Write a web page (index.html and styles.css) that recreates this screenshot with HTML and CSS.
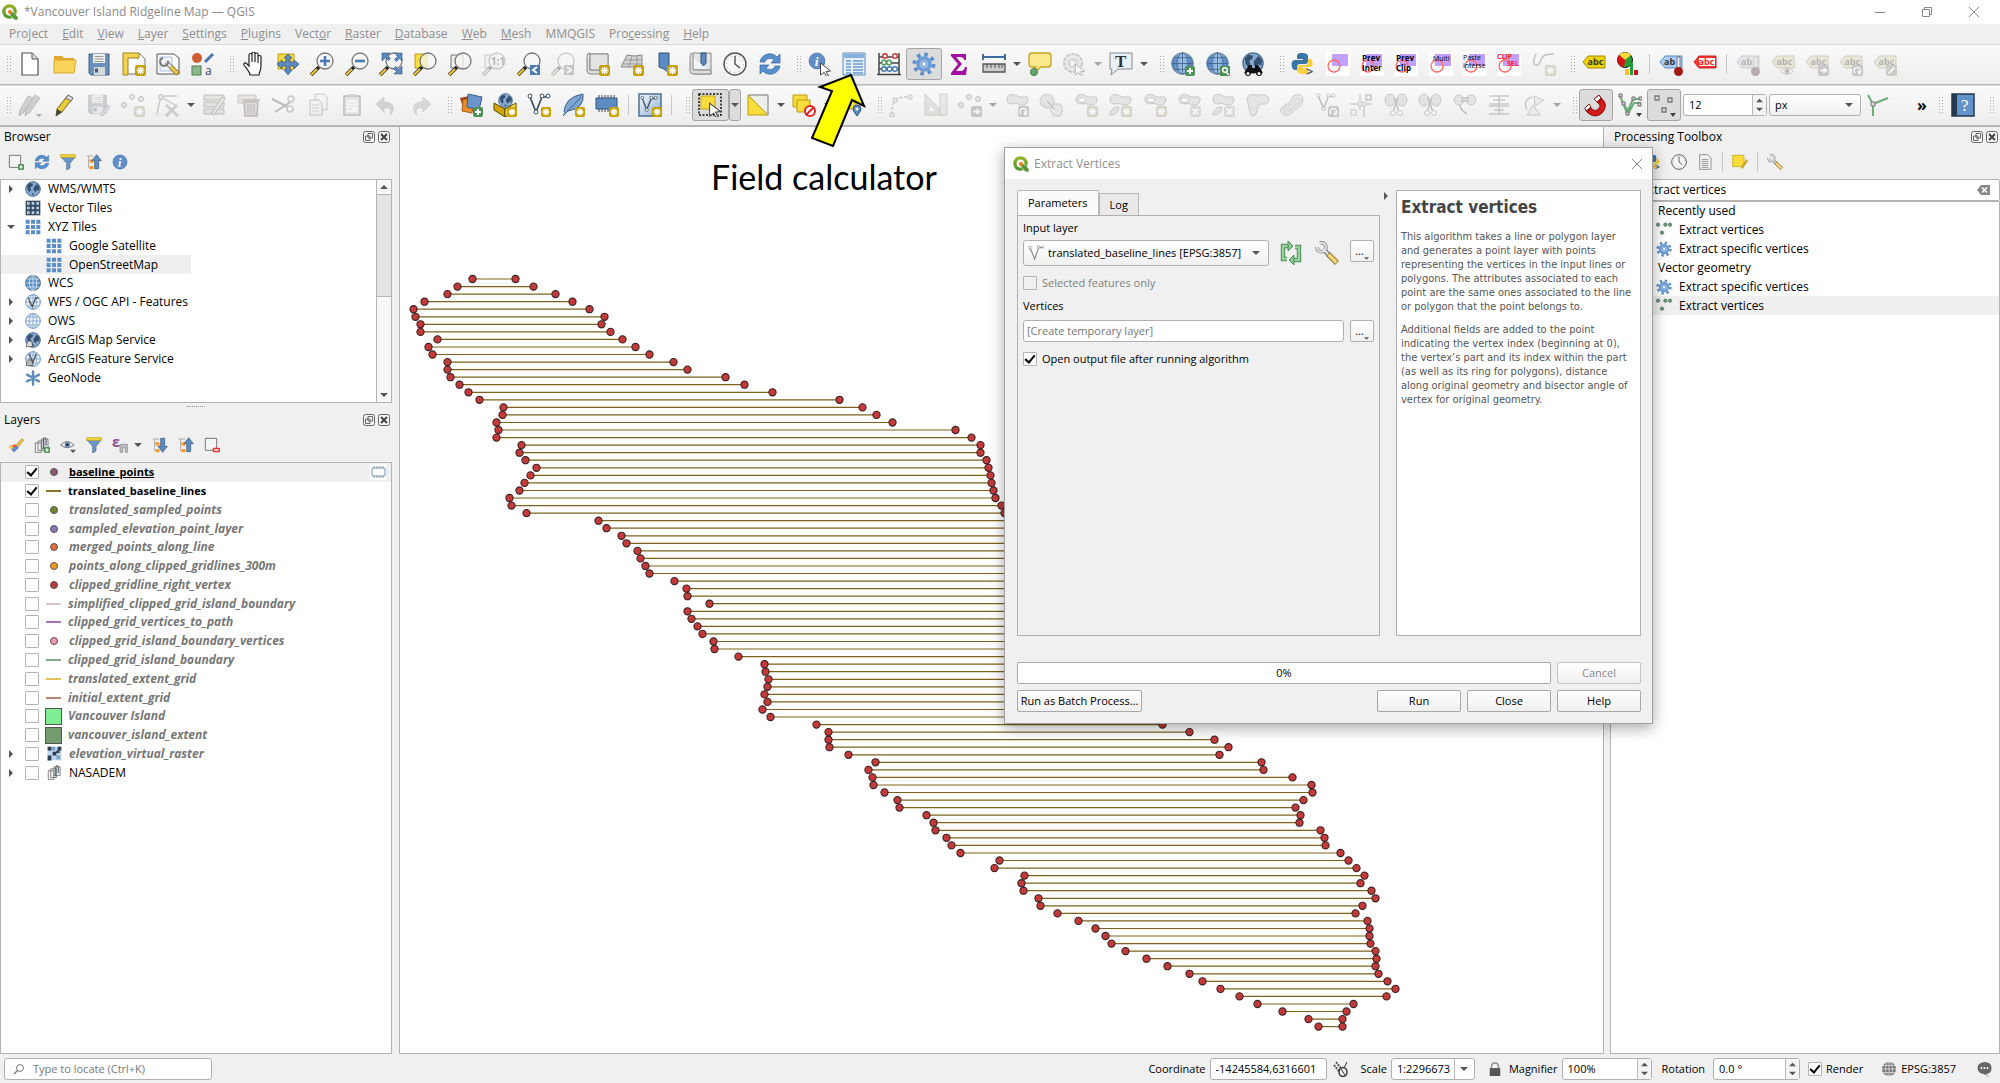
FILE: index.html
```html
<!DOCTYPE html>
<html lang="en">
<head>
<meta charset="utf-8">
<title>*Vancouver Island Ridgeline Map — QGIS</title>
<link rel="stylesheet" href="styles.css">
</head>
<body>
<svg class="defs" aria-hidden="true">
<defs>
<linearGradient id="gq" x1="0" y1="0" x2="0" y2="1"><stop offset="0" stop-color="#93b023"/><stop offset="1" stop-color="#4f9a2b"/></linearGradient>
<linearGradient id="gb" x1="0" y1="0" x2="1" y2="1"><stop offset="0" stop-color="#f4f8fc"/><stop offset="1" stop-color="#8fb0d4"/></linearGradient>
<linearGradient id="gw" x1="0" y1="0" x2="1" y2="0"><stop offset="0" stop-color="#3f74b8"/><stop offset=".5" stop-color="#a9cdf0"/><stop offset="1" stop-color="#3f74b8"/></linearGradient>
<symbol id="q" viewBox="0 0 16 16"><circle cx="7.500" cy="7.500" r="5.600" fill="none" stroke="url(#gq)" stroke-width="3.400"/><path d="M8 8h3.500l4.500 5v3h-3.500l-4.500-5z" fill="#589632" stroke="#fff" stroke-width=".6"/><circle cx="8" cy="8" r="2" fill="#ee7913"/></symbol>
<symbol id="b-star" viewBox="0 0 10 10"><rect width="10" height="10" rx="2" fill="#c4a000"/><path d="M5 1.500v7M1.500 5h7M2.500 2.500l5 5M7.500 2.500l-5 5" stroke="#fff" stroke-width="1.300"/></symbol>
<symbol id="b-plus" viewBox="0 0 10 10"><rect width="10" height="10" rx="2" fill="#4e9258"/><path d="M5 2v6M2 5h6" stroke="#fff" stroke-width="2"/></symbol>
<symbol id="b-x" viewBox="0 0 10 10"><rect width="10" height="10" rx="2" fill="#c9a5a5"/><path d="M2.500 2.500l5 5M7.500 2.500l-5 5" stroke="#fff" stroke-width="2"/></symbol>
<symbol id="b-go" viewBox="0 0 10 10"><rect width="10" height="10" rx="2" fill="#777"/><path d="M2 4h3V2l4 3-4 3V6H2z" fill="#fff"/></symbol>
<symbol id="b-rot" viewBox="0 0 10 10"><rect width="10" height="10" rx="2" fill="#777"/><path d="M3 7.500A3 3 0 1 1 6 8M6 4.500v3.500h2" fill="none" stroke="#fff" stroke-width="1.400"/></symbol>
<symbol id="b-pen" viewBox="0 0 10 10"><rect width="10" height="10" rx="2" fill="#8a8560"/><path d="M2.500 7.500l5-5" stroke="#fff" stroke-width="2"/></symbol>
<symbol id="lens" viewBox="0 0 24 24"><path d="M9 15l-8 8" stroke="#222" stroke-width="3.600"/><path d="M7 17l-6 6" stroke="#e8c33a" stroke-width="2.400"/><circle cx="15" cy="9" r="8" fill="#f6f7f4" fill-opacity=".75" stroke="#777" stroke-width="1.300"/></symbol>
<symbol id="globe" viewBox="0 0 24 24"><circle cx="12" cy="12" r="11.300" fill="#5b8cc4" stroke="#39536e"/><path d="M12 1v22M1 12h22M3 6h18M3 18h18" stroke="#cfe0ef" stroke-width="1.400"/><ellipse cx="12" cy="12" rx="5.500" ry="11" fill="none" stroke="#cfe0ef" stroke-width="1.400"/></symbol>
<symbol id="globew" viewBox="0 0 24 24"><circle cx="12" cy="12" r="11.300" fill="url(#gw)" stroke="#7a8794"/><path d="M12 1v22M1 12h22M3 6h18M3 18h18" stroke="#48698c" stroke-width="1"/><ellipse cx="12" cy="12" rx="6" ry="11" fill="none" stroke="#48698c"/></symbol>
<symbol id="globeo" viewBox="0 0 24 24"><circle cx="12" cy="12" r="11" fill="#eef4fb" stroke="#6d97c4" stroke-width="1.500"/><path d="M12 1v22M1 12h22M3 6h18M3 18h18" stroke="#7fa5cf" stroke-width="1.300"/><ellipse cx="12" cy="12" rx="5.500" ry="11" fill="none" stroke="#7fa5cf" stroke-width="1.300"/></symbol>
<symbol id="earth" viewBox="0 0 24 24"><circle cx="12" cy="12" r="11" fill="#86a8cf" stroke="#4d6d90" stroke-width="1.500"/><path d="M3 7l4-4 5 1-1 4-3 1 1 4-2 4-3-4zM13 10l5-6 4 5-1 6-3-2-2 4-3-3zM10 18l4 1-2 3z" fill="#34506f"/></symbol>
<symbol id="cursor" viewBox="0 0 12 14"><path d="M1 1l10 8-4.500.500 2.500 4-2 1-2.300-4L1 13z" fill="#fff" stroke="#444"/></symbol>
<symbol id="poly" viewBox="0 0 24 24"><path d="M2 8c0-6 5-7 10-4s12-2 11 4-7 6-10 4-10 3-11-4z" fill="#bcc6bc" stroke="#6f776f"/></symbol>
<symbol id="new" viewBox="0 0 24 24"><path d="M4 1h10l6 6v16H4z" fill="#fff" stroke="#555" stroke-width="1.200"/><path d="M14 1v6h6" fill="#ddd" stroke="#555"/></symbol>
<symbol id="open" viewBox="0 0 24 24"><path d="M1 4h8l2 2h10v4H1z" fill="#e3a92c"/><path d="M1 21V8h22l-2 13z" fill="#fad359" stroke="#d9a92e"/></symbol>
<symbol id="save" viewBox="0 0 24 24"><path d="M2 2h20v21H4l-2-2z" fill="#6a90bd" stroke="#44607e"/><path d="M6 2h12v9H6z" fill="#eee"/><path d="M7.500 4.500h9M7.500 7h9M7.500 9.500h9" stroke="#999"/><path d="M7 15h11v8H7z" fill="#d4d9de"/><path d="M8 16.500h3v4H8z" fill="#44607e"/></symbol>
<symbol id="layout" viewBox="0 0 24 24"><path d="M3 2h15l5 5v15H3z" fill="#fff" stroke="#777"/><path d="M1 1h16v5H6v17H1z" fill="#f2d453" stroke="#9b8322"/><use href="#b-star" x="13" y="13" width="11" height="11"/></symbol>
<symbol id="layoutm" viewBox="0 0 24 24"><path d="M1 2h17l5 4v16H1z" fill="#fff" stroke="#555"/><path d="M4 5h12v14H4z" fill="#eef4fa" stroke="#aac3de"/><path d="M10 10l6 6" stroke="#777" stroke-width="4"/><path d="M10 10l6 6" stroke="#eee" stroke-width="2.400"/><path d="M7 6a4 4 0 1 0 5 3" fill="none" stroke="#777" stroke-width="2"/><path d="M15 15l7 7" stroke="#8c7430" stroke-width="5"/><path d="M15 15l6.500 6.500" stroke="#e6bf45" stroke-width="3.400"/></symbol>
<symbol id="style" viewBox="0 0 24 24"><circle cx="6" cy="6" r="5" fill="#cf5c35"/><path d="M14 10l8-8" stroke="#4876ab" stroke-width="3"/><rect x="1" y="14" width="9" height="9" fill="#8db98d" stroke="#4e7d52"/><text x="14" y="23" font-size="12" fill="#444">a</text></symbol>
<symbol id="hand" viewBox="0 0 24 24"><path d="M8 14V3c0-2 3-2 3 0v7V1.500c0-2 3-2 3 0V10V2.500c0-2 3-2 3 0V11V5c0-2 3-2 3 0v9c0 5-2 6-2 9h-9c0-3-4-7-6-10-1-2 1.500-3 3-1z" fill="#fff" stroke="#222" stroke-width="1.200"/></symbol>
<symbol id="pan" viewBox="0 0 24 24"><path d="M2 2h16v15H2z" fill="#f5d936" stroke="#b79d1d"/><path d="M12 2l4 4h-2v4h4V8l5 4-5 5v-3h-4v4h2l-4 5-4-5h2v-4H6v3l-5-5 5-4v2h4V6H8z" fill="#5c8bc1" stroke="#33547a" stroke-width=".7"/></symbol>
<symbol id="zin" viewBox="0 0 24 24"><use href="#lens"/><path d="M15 4v10M10 9h10" stroke="#4a7ab3" stroke-width="2.600"/></symbol>
<symbol id="zout" viewBox="0 0 24 24"><use href="#lens"/><path d="M10 9h10" stroke="#4a7ab3" stroke-width="2.600"/></symbol>
<symbol id="zfull" viewBox="0 0 24 24"><use href="#lens"/><path d="M3 1h8L8.500 3.500l3 3-2 2-3-3L3 9zM23 1v8l-2.500-2.500-3 3-2-2 3-3L16 1zM23 22h-8l2.500-2.500-3-3 2-2 3 3L23 14z" fill="#5c8bc1" stroke="#33547a" stroke-width=".6"/></symbol>
<symbol id="zsel" viewBox="0 0 24 24"><path d="M2 2h12v14H2z" fill="#f8dc3c" stroke="#b79d1d"/><use href="#lens"/></symbol>
<symbol id="zlay" viewBox="0 0 24 24"><path d="M3 3h12v13H3z" fill="#eee" stroke="#777"/><use href="#lens"/></symbol>
<symbol id="znat" viewBox="0 0 24 24"><use href="#zlay"/><text x="9" y="13" font-size="10" font-weight="bold" fill="#333">1:1</text></symbol>
<symbol id="zlast" viewBox="0 0 24 24"><use href="#lens"/><path d="M13 13h10v10H13z" fill="#4a7ab3"/><path d="M20 15l-4 3 4 3" fill="none" stroke="#fff" stroke-width="2"/></symbol>
<symbol id="znext" viewBox="0 0 24 24"><use href="#lens"/><path d="M13 13h10v10H13z" fill="#777"/><path d="M16 15l4 3-4 3" fill="none" stroke="#fff" stroke-width="2"/></symbol>
<symbol id="mapn" viewBox="0 0 24 24"><path d="M1 4q0-3 3-3v17h18V2H4M1 4v15q0 3 4 3h12" fill="#ddd" stroke="#888"/><path d="M4 2h18v16H4z" fill="#e4e4e4" stroke="#888"/><use href="#b-star" x="13" y="13" width="11" height="11"/></symbol>
<symbol id="map3" viewBox="0 0 24 24"><path d="M7 3q8 2 15 0v12H1z" fill="#d4d4d4" stroke="#888"/><path d="M5 8h17M3 12h19M12 4l-3 11M17 4v11" stroke="#999"/><use href="#b-star" x="13" y="13" width="11" height="11"/></symbol>
<symbol id="bmn" viewBox="0 0 24 24"><path d="M5 1h10v20l-5-4-5-2z" fill="#5c8bc1" stroke="#33547a"/><use href="#b-star" x="13" y="13" width="11" height="11"/></symbol>
<symbol id="bm" viewBox="0 0 24 24"><path d="M1 4q0-3 3-3h18v17H5v4h17v-3" fill="#e4e4e4" stroke="#888"/><path d="M1 4v15q0 3 4 3h17V18H4V2" fill="#ddd" stroke="#888"/><path d="M12 1h5v10l-2.500 3L12 11z" fill="#5c8bc1" stroke="#33547a"/></symbol>
<symbol id="clock" viewBox="0 0 24 24"><circle cx="12" cy="12" r="11" fill="#f7f7f7" stroke="#555" stroke-width="1.400"/><circle cx="12" cy="12" r="8.500" fill="none" stroke="#999" stroke-dasharray="1 3.450"/><path d="M12 4v8l5 4" fill="none" stroke="#444" stroke-width="1.300"/></symbol>
<symbol id="refresh" viewBox="0 0 24 24"><path d="M2 10C3 2 14-1 19 5l3-3v9h-9l3-3c-3-3-9-1-9 2z" fill="#5a8fcf" stroke="#2f659f" stroke-width=".7"/><path d="M22 14c-1 8-12 11-17 5l-3 3v-9h9l-3 3c3 3 9 1 9-2z" fill="#5a8fcf" stroke="#2f659f" stroke-width=".7"/></symbol>
<symbol id="info" viewBox="0 0 24 24"><circle cx="12" cy="12" r="10.500" fill="#5f8fca" stroke="#3c6a9e"/><text x="9" y="19" font-size="18" font-family="Liberation Serif" font-style="italic" font-weight="bold" fill="#fff">i</text></symbol>
<symbol id="ident" viewBox="0 0 24 24"><use href="#info" width="18" height="18"/><use href="#cursor" x="11" y="10" width="13" height="14"/></symbol>
<symbol id="table" viewBox="0 0 24 24"><path d="M1 1h22v22H1z" fill="#e7f0fa" stroke="#5c8bc1"/><path d="M2 2h20v4H2z" fill="#88b1de"/><path d="M4 9h5M11 9h10M4 12h5M11 12h10M4 15h5M11 15h10M4 18h5M11 18h10M4 21h5M11 21h10" stroke="#6b9ad0" stroke-width="1.400"/></symbol>
<symbol id="abacus" viewBox="0 0 24 24"><path d="M2 1v21M22 1v21M2 5h20M2 11h20M2 17h20M0 22.500h24" stroke="#444" stroke-width="1.500"/><g fill="#fff" stroke-width="1.400"><g stroke="#c33"><circle cx="8" cy="4" r="2.300"/><circle cx="18" cy="4" r="2.300"/></g><g stroke="#4a9a54"><circle cx="7" cy="10.500" r="2.300"/><circle cx="12" cy="10.500" r="2.300"/></g><g stroke="#3c77b8"><circle cx="7" cy="17" r="2.300"/><circle cx="12.500" cy="17" r="2.300"/><circle cx="18" cy="17" r="2.300"/></g></g></symbol>
<symbol id="gear" viewBox="0 0 24 24"><circle cx="12" cy="12" r="9.500" fill="none" stroke="#5c8fce" stroke-width="4" stroke-dasharray="3.500 3.960"/><circle cx="12" cy="12" r="6" fill="#a9c8ea" stroke="#6d9cd6" stroke-width="3.400"/><circle cx="12" cy="12" r="2.600" fill="#eaf1f9" stroke="#5c8fce"/></symbol>
<symbol id="sigma" viewBox="0 0 24 24"><path d="M4 2h15v6h-2q0-3-4-3H9l6 7-6 7h5q3 0 4-4h2l-1 8H4v-2l7-9-7-8z" fill="#a310a3"/></symbol>
<symbol id="ruler" viewBox="0 0 24 24"><path d="M1 5h22M1 2v6M23 2v6" stroke="#3f6c9e" stroke-width="2"/><path d="M1 12h22v8H1z" fill="#ccc" stroke="#555" stroke-width="1.300"/><path d="M5 12v4M9 12v4M13 12v4M17 12v4M20 12v4" stroke="#555"/></symbol>
<symbol id="tip" viewBox="0 0 24 24"><path d="M4 1h16q3 0 3 3v8q0 3-3 3h-7l-7 6 2-6H4q-3 0-3-3V4q0-3 3-3z" fill="#fbe98c" stroke="#c3a21d" stroke-width="1.300"/><circle cx="6" cy="20" r="3.500" fill="#69a86f" stroke="#3b7a42"/></symbol>
<symbol id="act" viewBox="0 0 24 24"><circle cx="11" cy="11" r="9" fill="#ddd" stroke="#777" stroke-width="2" stroke-dasharray="4 1"/><circle cx="11" cy="11" r="5.500" fill="#aaa"/><path d="M9 8l5 3-5 3z" fill="#fff"/><use href="#cursor" x="12" y="11" width="12" height="13"/></symbol>
<symbol id="text" viewBox="0 0 24 24"><path d="M1 1h22v16H9l-7 6 1-6H1z" fill="#e8f1f8" stroke="#888"/><text x="6" y="15" font-size="17" font-family="Liberation Serif" font-weight="bold" fill="#333">T</text></symbol>
<symbol id="gadd" viewBox="0 0 24 24"><use href="#globew" width="23" height="23"/><use href="#b-plus" x="14" y="14" width="10" height="10"/></symbol>
<symbol id="gsea" viewBox="0 0 24 24"><use href="#globew" width="23" height="23"/><path d="M14 14h10v10H14z" fill="#4e9258"/><circle cx="19" cy="18" r="2.300" fill="none" stroke="#fff" stroke-width="1.400"/><path d="M20 20l3 3" stroke="#fff" stroke-width="1.400"/></symbol>
<symbol id="gbin" viewBox="0 0 24 24"><use href="#earth" width="24" height="22"/><path d="M8 13h3v3h3v-3h3l5 8H3z" fill="#111"/><circle cx="7" cy="21" r="3" fill="#111"/><circle cx="18" cy="21" r="3" fill="#111"/><circle cx="7" cy="21.500" r="1.500" fill="#fff"/><circle cx="18" cy="21.500" r="1.500" fill="#fff"/></symbol>
<symbol id="py" viewBox="0 0 24 24"><path d="M11 1c-5 0-5 2-5 4v2h6v1H4c-3 0-4 3-3 7 .500 2 1.500 3 3 3h2v-3c0-2 1-3 3-3h5c2 0 3-1 3-3V5c0-3-2-4-6-4z" fill="#3a75a9"/><path d="M12 22c5 0 5-2 5-4v-2h-6v-1h8c3 0 3-3 2-6-.500-2-1.500-2-3-2h-1v3c0 2-1 3-3 3H9c-2 0-3 1-3 3v3c0 2 2 3 6 3z" fill="#fbcf3e"/><text x="15" y="24" font-size="13" font-weight="bold" fill="#555">&gt;</text></symbol>
<symbol id="pc" viewBox="0 0 24 24"><path d="M0 0h24v24H0z" fill="#fff"/><path d="M6 2h16v12H6z" fill="#c3a0ff"/><circle cx="8" cy="14" r="6" fill="none" stroke="#f66" stroke-width="1.300"/></symbol>
<symbol id="curve" viewBox="0 0 24 24"><path d="M4 2C-2 14 6 16 8 10S12 2 22 2" fill="none" stroke="#666" stroke-width="1.500"/><use href="#b-star" x="13" y="13" width="11" height="11"/></symbol>
<symbol id="abc" viewBox="0 0 24 24"><path d="M1 10l5-6h17v12H6z" fill="#edd400" stroke="#a08c00"/><text x="5.500" y="13" font-size="9" font-weight="bold" fill="#333">abc</text></symbol>
<symbol id="abcr" viewBox="0 0 24 24"><path d="M1 10l5-6h17v12H6z" fill="#f33" stroke="#c22"/><path d="M6 6h16v8H6z" fill="#fff"/><text x="5.500" y="13" font-size="9" font-weight="bold" fill="#f22">abc</text></symbol>
<symbol id="abct" viewBox="0 0 24 24"><path d="M1 10l5-6h17v12H6z" fill="#a9cdf3" stroke="#5c8bc1"/><text x="5" y="13" font-size="9" font-weight="bold" fill="#333">ab</text><path d="M18 5h3v12h-3z" fill="#eee" stroke="#555" stroke-width=".7"/><circle cx="19.500" cy="19.500" r="4.500" fill="#a01818"/></symbol>
<symbol id="eye" viewBox="0 0 24 24"><path d="M1 13Q12 2 23 13Q12 22 1 13z" fill="#fff" stroke="#666" stroke-width="1.500"/><circle cx="12" cy="12.500" r="4.500" fill="#5c8bc1"/><circle cx="12" cy="12.500" r="2" fill="#222"/></symbol>
<symbol id="eyed" viewBox="0 0 24 24"><use href="#eye" width="22" height="22"/><path d="M15 19h9l-4.500 5z" fill="#555"/></symbol>
<symbol id="abce" viewBox="0 0 24 24"><use href="#abc"/><use href="#eye" x="8" y="12" width="16" height="14"/></symbol>
<symbol id="abcg" viewBox="0 0 24 24"><use href="#abc"/><use href="#b-go" x="13" y="13" width="11" height="11"/></symbol>
<symbol id="abco" viewBox="0 0 24 24"><use href="#abc"/><use href="#b-rot" x="13" y="13" width="11" height="11"/></symbol>
<symbol id="abcp" viewBox="0 0 24 24"><use href="#abc"/><use href="#b-pen" x="13" y="13" width="11" height="11"/></symbol>
<symbol id="pie" viewBox="0 0 24 24"><circle cx="9" cy="8" r="7.500" fill="#2a9a33" stroke="#222"/><path d="M9 8L3 3a8 8 0 0 1 12 0z" fill="#fbd93a"/><path d="M9 8L3 3a8 8 0 0 0 5 12.500z" fill="#d11"/><path d="M9 17h4v6H9z" fill="#fb3"/><path d="M14 11h3v12h-3z" fill="#1f9a3c"/><path d="M18 18h4v5h-4z" fill="#c11"/></symbol>
<symbol id="pencil" viewBox="0 0 24 24"><path d="M4 16L15 2l5 3L9 19l-6 4z" fill="#e8cb3c" stroke="#77661a"/><path d="M4 16l5 3-6 4z" fill="#444"/><path d="M15 2l5 3-2 3-5-3z" fill="#ddd" stroke="#777"/></symbol>
<symbol id="pencils" viewBox="0 0 24 24"><g fill="#a08888" stroke="#555"><path d="M2 17L10 3l5 2L6 19l-5 4z"/><path d="M8 17L17 2l5 3-10 14-5 4z"/></g><path d="M18 21h6l-3 3z" fill="#222"/></symbol>
<symbol id="savee" viewBox="0 0 24 24"><use href="#save" width="21" height="22"/><path d="M13 22l8-10 2 2-7 9z" fill="#d4a6a0" stroke="#777"/></symbol>
<symbol id="pts" viewBox="0 0 24 24"><g fill="#ccd" stroke="#556"><circle cx="3" cy="12" r="2.500"/><circle cx="11" cy="4" r="2.500"/><circle cx="20" cy="6" r="2.500"/></g><use href="#b-star" x="13" y="13" width="11" height="11"/></symbol>
<symbol id="ptsg" viewBox="0 0 24 24"><g fill="#ccd" stroke="#556"><circle cx="3" cy="12" r="2.500"/><circle cx="11" cy="4" r="2.500"/><circle cx="20" cy="6" r="2.500"/></g><use href="#b-go" x="13" y="13" width="11" height="11"/></symbol>
<symbol id="vtx" viewBox="0 0 24 24"><path d="M1 22Q3 10 5 4M3 3h18M5 4l14 8" fill="none" stroke="#777" stroke-width="1.400"/><circle cx="5" cy="4" r="2.500" fill="#ccc" stroke="#555"/><path d="M10 12l12 11M21 12L10 23" stroke="#888" stroke-width="3"/></symbol>
<symbol id="attr" viewBox="0 0 24 24"><path d="M2 2h20v5H2zM2 9h20v5H2zM2 16h20v5H2z" fill="#c5c5a5" stroke="#555"/><path d="M9 21L20 4l3 2-11 16z" fill="#ccc" stroke="#555"/></symbol>
<symbol id="del" viewBox="0 0 24 24"><path d="M1 2h18v8H1z" fill="#ccc49a" stroke="#777"/><path d="M5 7h18M7 9h14l-1 14H8z" fill="#caa3a3" stroke="#844" stroke-width="1.400"/><path d="M11 11v10M14 11v10M17 11v10" stroke="#844"/></symbol>
<symbol id="cut" viewBox="0 0 24 24"><path d="M1 6l16 8M4 19L21 8" stroke="#555" stroke-width="2"/><circle cx="20" cy="6" r="3" fill="none" stroke="#777" stroke-width="1.500"/><circle cx="19" cy="16" r="3" fill="none" stroke="#777" stroke-width="1.500"/></symbol>
<symbol id="copy" viewBox="0 0 24 24"><path d="M9 1h9l3 3v13H9z" fill="#eee" stroke="#777"/><path d="M4 7h9l3 3v12H4z" fill="#eee" stroke="#666"/><path d="M6 12h7M6 15h7M6 18h7" stroke="#999"/></symbol>
<symbol id="paste" viewBox="0 0 24 24"><path d="M4 3h16v19H4z" fill="#ccc" stroke="#555" stroke-width="1.500"/><path d="M7 7h10v12H7z" fill="#fff"/><path d="M9 1h6v4H9z" fill="#999"/><path d="M8 10h8M8 13h8M8 16h5" stroke="#aaa"/></symbol>
<symbol id="undo" viewBox="0 0 24 24"><path d="M2 11l8-7v5c10-1 12 8 6 13 3-6-1-8-6-7v4z" fill="#aa8f80" stroke="#777" stroke-width=".7"/></symbol>
<symbol id="redo" viewBox="0 0 24 24"><path d="M22 11l-8-7v5C4 8 2 17 8 22c-3-6 1-8 6-7v4z" fill="#9aac9a" stroke="#777" stroke-width=".7"/></symbol>
<symbol id="dsm" viewBox="0 0 24 24"><path d="M1 5l9-2 3 13-8 2z" fill="#a33c1a"/><path d="M4 6l11 1-2 13-10-2z" fill="#e88c2a" stroke="#a35c1a"/><path d="M9 1l14 3-3 13-12-3z" fill="#6a95c9" stroke="#3b5f8c"/><use href="#b-plus" x="14" y="14" width="10" height="10"/></symbol>
<symbol id="gpkg" viewBox="0 0 24 24"><use href="#earth" x="5" y="0" width="15" height="15"/><path d="M1 10l11 6v8L1 17z" fill="#d2a500" stroke="#574800"/><path d="M12 16l11-6v8l-11 6z" fill="#fbe14b" stroke="#574800"/><use href="#b-star" x="14" y="14" width="10" height="10"/></symbol>
<symbol id="vnode" viewBox="0 0 24 24"><path d="M3 4l6 15L15 4h7" fill="none" stroke="#3b4f63" stroke-width="1.700"/><g fill="#fff" stroke="#3b4f63"><circle cx="3" cy="3" r="2"/><circle cx="9" cy="19" r="2"/><circle cx="15" cy="3" r="2"/><circle cx="21" cy="3" r="2"/></g></symbol>
<symbol id="vlin" viewBox="0 0 24 24"><path d="M3 4l7 17L16 4h6" fill="none" stroke="#888" stroke-width="1.700"/><g fill="#fff" stroke="#888"><circle cx="3" cy="4" r="2"/><circle cx="16" cy="3" r="2"/><circle cx="22" cy="3" r="1.500"/></g></symbol>
<symbol id="vnew" viewBox="0 0 24 24"><use href="#vnode"/><use href="#b-star" x="14" y="14" width="10" height="10"/></symbol>
<symbol id="feather" viewBox="0 0 24 24"><path d="M3 19Q4 4 22 1Q24 15 7 18L2 23" fill="#7fa6d3" stroke="#3b5f8c"/><path d="M2 23L20 4" stroke="#3b5f8c"/><use href="#b-star" x="14" y="14" width="10" height="10"/></symbol>
<symbol id="chip" viewBox="0 0 24 24"><path d="M4 2v17M7 2v17M10 2v17M13 2v17M16 2v17M19 2v17" stroke="#444"/><path d="M1 5h21v11H1z" fill="#5c8bc1" stroke="#33547a"/><use href="#b-star" x="14" y="14" width="10" height="10"/></symbol>
<symbol id="virt" viewBox="0 0 24 24"><path d="M1 1h22v22H1z" fill="url(#gb)" stroke="#4d6d90" stroke-width="1.500"/><use href="#vnode" x="2" y="2" width="18" height="19"/><use href="#b-star" x="14" y="14" width="10" height="10"/></symbol>
<symbol id="sel" viewBox="0 0 24 24"><path d="M1 1h22v21H1z" fill="none" stroke="#111" stroke-width="1.500" stroke-dasharray="2 1.500"/><path d="M3 3h14v13H3z" fill="#f8dc3c" stroke="#c4a915"/><use href="#cursor" x="10" y="9" width="14" height="15"/></symbol>
<symbol id="selv" viewBox="0 0 24 24"><path d="M2 2h20v20z" fill="#eee" stroke="#777"/><path d="M2 2v20h20z" fill="#f8dc3c" stroke="#b99c10"/></symbol>
<symbol id="desel" viewBox="0 0 24 24"><path d="M1 2h14v12H1z" fill="#f8dc3c" stroke="#b99c10"/><path d="M5 7h13v12H5z" fill="#f8dc3c" stroke="#b99c10"/><circle cx="18" cy="18" r="5" fill="#fff" stroke="#d22" stroke-width="2"/><path d="M14 22l8-8" stroke="#d22" stroke-width="2"/></symbol>
<symbol id="sloc" viewBox="0 0 24 24"><path d="M3 3h14v13H3z" fill="#f8dc3c" stroke="#b99c10"/><path d="M18 23q-4-5-4-7a4 4 0 0 1 8 0q0 2-4 7z" fill="#5c8bc1" stroke="#33547a"/><circle cx="18" cy="16" r="1.500" fill="#fff"/></symbol>
<symbol id="arc" viewBox="0 0 24 24"><path d="M3 22Q1 2 21 4" fill="none" stroke="#777" stroke-width="1.500" stroke-dasharray="3 2"/><path d="M1 20h4v4H1zM4 5h4v4H4zM19 2h4v4h-4z" fill="#ddd" stroke="#777"/></symbol>
<symbol id="tri" viewBox="0 0 24 24"><path d="M1 1l20 21H1z" fill="#ccb9b0" stroke="#887"/><path d="M6 13l5 5H6z" fill="#fff"/><path d="M16 1h7v21h-7z" fill="#d5d5b0" stroke="#887"/></symbol>
<symbol id="p1" viewBox="0 0 24 24"><use href="#poly" y="-1"/><use href="#b-rot" x="13" y="13" width="11" height="11"/></symbol>
<symbol id="p2" viewBox="0 0 24 24"><circle cx="8" cy="8" r="7" fill="#bcc6bc" stroke="#6f776f"/><path d="M11 17l4-6h6l3 6-3 6h-6z" fill="#ccd3dd" stroke="#6f776f"/><path d="M8 8l8 8" stroke="#333"/></symbol>
<symbol id="p3" viewBox="0 0 24 24"><use href="#poly" y="-1"/><ellipse cx="8" cy="7" rx="4" ry="2.500" fill="#fff" stroke="#777"/><use href="#b-star" x="13" y="13" width="11" height="11"/></symbol>
<symbol id="p4" viewBox="0 0 24 24"><use href="#poly" y="-1"/><path d="M2 20q3-7 9-6-1 8-9 8z" fill="#bcc6bc" stroke="#6f776f"/><use href="#b-star" x="13" y="13" width="11" height="11"/></symbol>
<symbol id="p5" viewBox="0 0 24 24"><use href="#poly" y="-1"/><ellipse cx="8" cy="7" rx="4" ry="2.500" fill="#fff" stroke="#777"/><use href="#b-x" x="13" y="13" width="11" height="11"/></symbol>
<symbol id="p6" viewBox="0 0 24 24"><use href="#poly" y="-1"/><path d="M2 20q3-7 9-6-1 8-9 8z" fill="#bcc6bc" stroke="#6f776f"/><use href="#b-x" x="13" y="13" width="11" height="11"/></symbol>
<symbol id="p7" viewBox="0 0 24 24"><path d="M1 6q1-6 9-4 13-2 13 5 0 5-9 4-2 2-3 7t-4 5-4-8z" fill="#c3c9bb" stroke="#6f776f"/></symbol>
<symbol id="p8" viewBox="0 0 24 24"><path d="M13 3q9-4 10 3t-9 11q-5 8-11 4T5 12q6-2 8-9z" fill="#d9d6bb" stroke="#6f776f"/><path d="M14 6q7-3 7 1t-9 8q-4 6-7 4t1-6q6-1 8-7z" fill="#bcc6bc" stroke="#999"/></symbol>
<symbol id="p9" viewBox="0 0 24 24"><use href="#vnode" width="22" height="20"/><use href="#b-rot" x="13" y="13" width="11" height="11"/></symbol>
<symbol id="p10" viewBox="0 0 24 24"><path d="M11 1v16M15 9v15M1 11h22" stroke="#888" stroke-width="1.500"/><path d="M9 9h4v4H9zM13 9h4v4h-4z" fill="#ddd" stroke="#888"/><use href="#b-x" x="1" y="16" width="7" height="7"/><use href="#b-plus" x="16" y="1" width="7" height="7"/></symbol>
<symbol id="p11" viewBox="0 0 24 24"><ellipse cx="6" cy="7" rx="5" ry="6" fill="#bcc6bc" stroke="#6f776f"/><ellipse cx="18" cy="7" rx="5" ry="6" fill="#bcc6bc" stroke="#6f776f"/><path d="M10 4l5 15M14 4L9 19" stroke="#666" stroke-width="1.500"/><circle cx="9" cy="20" r="2.500" fill="#fff" stroke="#a66"/><circle cx="16" cy="20" r="2.500" fill="#fff" stroke="#a66"/></symbol>
<symbol id="p12" viewBox="0 0 24 24"><ellipse cx="6" cy="7" rx="5" ry="5" fill="#bcc6bc" stroke="#6f776f"/><ellipse cx="18" cy="7" rx="5" ry="5" fill="#bcc6bc" stroke="#6f776f"/><path d="M8 5h8M8 8h8M7 12q0 5 7 9" fill="none" stroke="#666" stroke-width="1.500"/></symbol>
<symbol id="p13" viewBox="0 0 24 24"><path d="M2 3h20M2 11h20M2 13h20M2 21h20M6 7h12M7 17h10M12 3v18" stroke="#777" stroke-width="1.500"/></symbol>
<symbol id="p14" viewBox="0 0 24 24"><path d="M12 3l10 4-9 6zM5 22l6-10 7 10z" fill="#ddd" stroke="#777"/><path d="M5 17q-5-10 5-13" fill="none" stroke="#777" stroke-width="1.500"/></symbol>
<symbol id="magnet" viewBox="0 0 24 24"><path d="M14 10c3 3 2 4 0 6s-4 2-7-1l-4 4c5 5 11 5 15 1s5-10 0-14z" fill="#d11a1a" stroke="#700" stroke-width=".8"/><path d="M14 10l4-4-3-4-5 4zM7 15l-4 4-2-4 4-4z" fill="#d11a1a" stroke="#700" stroke-width=".8"/><path d="M10 6l5-4 2 3-4 4zM1 15l4-4 2 3-5 4z" fill="#fff" stroke="#700" stroke-width=".8"/></symbol>
<symbol id="snapv" viewBox="0 0 24 24"><path d="M2 3l7 17L15 6h8M5 10l6 9 5-9h7" fill="none" stroke="#6fae76" stroke-width="2"/><path d="M1 1h3v3H1zM8 19h3v3H8zM14 4h3v3h-3zM21 4h3v3h-3zM4 9h3v3H4zM20 10h3v3h-3z" fill="#ddd" stroke="#666"/><path d="M18 20h6l-3 4z" fill="#444"/></symbol>
<symbol id="snapd" viewBox="0 0 24 24"><path d="M3 3h4v4H3zM16 5h4v4h-4zM10 15h4v4h-4z" fill="#ddd" stroke="#777" stroke-width="1.300"/><path d="M18 20h6l-3 4z" fill="#444"/></symbol>
<symbol id="topo" viewBox="0 0 24 24"><path d="M2 2l5 9v12M7 11l15-6" fill="none" stroke="#6fae76" stroke-width="2"/><path d="M5 9h4v4H5z" fill="#ddd" stroke="#777"/></symbol>
<symbol id="book" viewBox="0 0 24 24"><path d="M1 1h22v22H1z" fill="#6292c9" stroke="#24394f" stroke-width="1.500"/><path d="M1 1h5v22H1z" fill="#24394f"/><text x="10" y="18" font-size="17" font-family="Liberation Serif" fill="#fff">?</text></symbol>
<symbol id="addl" viewBox="0 0 24 24"><path d="M2 2h17v18H2z" fill="#f4f4f4" stroke="#777" stroke-width="1.500"/><use href="#b-plus" x="15" y="15" width="9" height="9"/></symbol>
<symbol id="reml" viewBox="0 0 24 24"><path d="M2 2h17v18H2z" fill="#f4f4f4" stroke="#777" stroke-width="1.500"/><rect x="13" y="16" width="11" height="7" rx="2" fill="#e33"/><path d="M15 19.500h7" stroke="#fff" stroke-width="2"/></symbol>
<symbol id="funnel" viewBox="0 0 24 24"><path d="M1 4h22l-8 10v7l-5 3V14z" fill="#6a95c9" stroke="#4d6d90"/><path d="M1 1h22v4H1z" fill="#f8dc3c" stroke="#b99c10"/></symbol>
<symbol id="coll" viewBox="0 0 24 24"><path d="M1 3h10M4 3v18h6M4 10h6" fill="none" stroke="#888"/><path d="M6 8h5v5H6zM6 18h5v5H6z" fill="#fb9a2c"/><path d="M16 1l7 9h-4v12h-6V10H9z" fill="#5c8bc1" stroke="#33547a"/></symbol>
<symbol id="expd" viewBox="0 0 24 24"><path d="M1 3h10M4 3v18h6M4 10h6" fill="none" stroke="#888"/><path d="M6 8h5v5H6zM6 18h5v5H6z" fill="#fb9a2c"/><path d="M16 23l7-9h-4V2h-6v12H9z" fill="#5c8bc1" stroke="#33547a"/></symbol>
<symbol id="brush" viewBox="0 0 24 24"><path d="M12 12L21 2l3 3-9 10z" fill="#e7bb4c" stroke="#a9812a" stroke-width=".7"/><path d="M1 14l10-3 5 5-7 7z" fill="#f05a3a"/><path d="M5 18l8-5 3 3-7 7z" fill="#5d8bd0"/><path d="M1 14l5-1 2 4-3 1z" fill="#f9d342"/></symbol>
<symbol id="grp" viewBox="0 0 24 24"><path d="M2 9h9v14H2zM6 6h9v14H6zM11 3h10v14H11z" fill="#f4f4f4" stroke="#777" stroke-width="1.400"/><path d="M14 18V4q0-3 2-3t2 3v9" fill="none" stroke="#456" stroke-width="1.600"/></symbol>
<symbol id="grpa" viewBox="0 0 24 24"><use href="#grp"/><use href="#b-plus" x="15" y="15" width="9" height="9"/></symbol>
<symbol id="eps" viewBox="0 0 24 24"><text x="0" y="15" font-size="22" font-weight="bold" fill="#8b4a8b">ε</text><path d="M12 11h11v12h-3v-7h-4v7h-4z" fill="#bbb" stroke="#888"/></symbol>
<symbol id="vtile" viewBox="0 0 24 24"><path d="M1 1h22v22H1z" fill="#33475d"/><path d="M3 3h4v4H3zM10 3h4v4h-4zM17 3h4v4h-4zM3 10h4v4H3zM10 10h4v4h-4zM17 10h4v4h-4zM3 17h4v4H3zM10 17h4v4h-4zM17 17h4v4h-4z" fill="#b9cfe6"/></symbol>
<symbol id="xyz" viewBox="0 0 24 24"><path d="M1 1h6v6H1zM9 1h6v6H9zM17 1h6v6h-6zM1 9h6v6H1zM9 9h6v6H9zM17 9h6v6h-6zM1 17h6v6H1zM9 17h6v6H9zM17 17h6v6h-6z" fill="#5a8dc8"/></symbol>
<symbol id="wfs" viewBox="0 0 24 24"><use href="#globeo"/><path d="M5 6l6 13 5-13h4" fill="none" stroke="#555" stroke-width="2"/></symbol>
<symbol id="arcm" viewBox="0 0 24 24"><use href="#earth"/><path d="M2 22q0-8 5-9 5 1 4 9z" fill="#ddd" stroke="#333"/></symbol>
<symbol id="arcf" viewBox="0 0 24 24"><use href="#globeo"/><path d="M6 4l6 13 5-13" fill="none" stroke="#555" stroke-width="2"/><path d="M2 22q0-8 5-9 5 1 4 9z" fill="#bbb" stroke="#333"/></symbol>
<symbol id="geon" viewBox="0 0 24 24"><path d="M12 2v20M3 7l18 10M21 7L3 17" stroke="#5f8cbc" stroke-width="3.600" stroke-linecap="round"/></symbol>
<symbol id="rast" viewBox="0 0 24 24"><path d="M1 1h22v22H1z" fill="#bcd4ec"/><path d="M1 1h6v6H1zM17 1h6v6h-6zM9 9h6v6H9zM1 15h6v8H1zM15 7h5v4h-5z" fill="#2c3e50"/><path d="M7 1h6v6H7zM15 15h6v6h-6z" fill="#7ba0c6"/></symbol>
<symbol id="ext" viewBox="0 0 24 24"><g fill="#6d9a7c" stroke="#3f6450"><circle cx="3" cy="4" r="2.500"/><circle cx="14" cy="4" r="2.500"/><circle cx="21" cy="4" r="2.500"/><circle cx="9" cy="16" r="2.500"/></g></symbol>
<symbol id="log" viewBox="0 0 24 24"><path d="M4 1h12l5 5v17H4z" fill="#f4f4f4" stroke="#888" stroke-width="1.300"/><path d="M7 8h10M7 11h10M7 14h10M7 17h10M7 20h10" stroke="#888" stroke-width="1.300"/></symbol>
<symbol id="note" viewBox="0 0 24 24"><path d="M1 2h17v13l-5 4H1z" fill="#f8dc3c" stroke="#b99c10"/><path d="M13 21L21 8l3 2-8 12z" fill="#c9a32c"/></symbol>
<symbol id="wrench" viewBox="0 0 24 24"><path d="M8 8l6 6" stroke="#888" stroke-width="5"/><path d="M5 2a4.500 4.500 0 1 1-3 4" fill="none" stroke="#888" stroke-width="3.600"/><path d="M5 2a4.500 4.500 0 1 1-3 4M8 8l6 6" fill="none" stroke="#e4e4e4" stroke-width="2"/><path d="M13 13l9 9" stroke="#8c7430" stroke-width="5.500"/><path d="M13.500 13.500l8 8" stroke="#f1d77d" stroke-width="3.500"/></symbol>
<symbol id="loop" viewBox="0 0 24 24"><path d="M9 5H4v13h4M15 19h5V6h-4" fill="none" stroke="#4c8f55" stroke-width="4.400"/><path d="M9 5H4v13h4M15 19h5V6h-4" fill="none" stroke="#9ad0a0" stroke-width="2.400"/><path d="M9 0l5 5-5 5zM15 14l-5 5 5 5z" fill="#8ac791" stroke="#4c8f55"/></symbol>
<symbol id="float" viewBox="0 0 12 12"><rect x=".5" y=".5" width="11" height="11" rx="2" fill="#f6f6f6" stroke="#666"/><path d="M5 2.500h4.500V7H5zM2.500 5H7v4.500H2.500z" fill="#f6f6f6" stroke="#666"/></symbol>
<symbol id="cls" viewBox="0 0 12 12"><rect x=".5" y=".5" width="11" height="11" rx="2" fill="#f6f6f6" stroke="#666"/><path d="M3 3l6 6M9 3l-6 6" stroke="#444" stroke-width="2"/></symbol>
<symbol id="mouse" viewBox="0 0 16 16"><path d="M3 1l8 10M1 4l7 9" stroke="#555" stroke-width="2" stroke-dasharray="2 1"/><ellipse cx="10" cy="11" rx="4" ry="4.500" fill="#eee" stroke="#333" stroke-width="1.400"/><path d="M8 8l4 6M14 1l-3 6" stroke="#333"/></symbol>
<symbol id="lock" viewBox="0 0 16 16"><path d="M4 8V5a4 4 0 0 1 8 0v3" fill="none" stroke="#999" stroke-width="2"/><path d="M2 7h12v9H2z" fill="#555"/></symbol>
<symbol id="world" viewBox="0 0 16 16"><circle cx="8" cy="8" r="7" fill="#777"/><path d="M8 1v14M1 8h14M2 4.500h12M2 11.500h12" stroke="#ddd" stroke-width=".8"/><ellipse cx="8" cy="8" rx="3.500" ry="7" fill="none" stroke="#ddd" stroke-width=".8"/></symbol>
<symbol id="msg" viewBox="0 0 16 16"><path d="M8 1q7 0 7 6t-6 6l4 3-6-3q-6-1-6-6t7-6z" fill="#666"/><circle cx="5" cy="7" r="1" fill="#fff"/><circle cx="8" cy="7" r="1" fill="#fff"/><circle cx="11" cy="7" r="1" fill="#fff"/></symbol>
<symbol id="mem" viewBox="0 0 16 16"><path d="M4 2v12M7 2v12M10 2v12M13 2v12" stroke="#7f99b3"/><rect x="2" y="4" width="13" height="8" rx="1" fill="#fff" stroke="#6d8aa8"/></symbol>
<symbol id="dn" viewBox="0 0 8 8"><path d="M0 2h8L4 6z" fill="#555"/></symbol>
<symbol id="up" viewBox="0 0 8 8"><path d="M0 6h8L4 2z" fill="#555"/></symbol>
<symbol id="rt" viewBox="0 0 8 8"><path d="M2 0l4 4-4 4z" fill="#555"/></symbol>
</defs>
</svg>

<header class="titlebar">
  <svg class="i16"><use href="#q"/></svg><span class="title">*Vancouver Island Ridgeline Map — QGIS</span>
  <button class="win" aria-label="Minimize"><svg class="i12" viewBox="0 0 12 12"><path d="M1 6.500h10" stroke="#888"/></svg></button>
  <button class="win" aria-label="Restore"><svg class="i12" viewBox="0 0 12 12"><path d="M1.500 3.500h7v7h-7zM3.500 3V1.500h7v7H9" fill="none" stroke="#888"/></svg></button>
  <button class="win" aria-label="Close window"><svg class="i12" viewBox="0 0 12 12"><path d="M1 1l10 10M11 1L1 11" stroke="#888"/></svg></button>
</header>
<nav class="menubar">
  <a href="#">Pro<u>j</u>ect</a><a href="#"><u>E</u>dit</a><a href="#"><u>V</u>iew</a><a href="#"><u>L</u>ayer</a><a href="#"><u>S</u>ettings</a><a href="#"><u>P</u>lugins</a><a href="#">Vect<u>o</u>r</a><a href="#"><u>R</u>aster</a><a href="#"><u>D</u>atabase</a><a href="#"><u>W</u>eb</a><a href="#"><u>M</u>esh</a><a href="#">MMQGIS</a><a href="#">Pro<u>c</u>essing</a><a href="#"><u>H</u>elp</a>
</nav>

<div class="toolbar row1">
  <div class="group"><i class="grip"></i>
    <button class="tb"><svg><use href="#new"/></svg></button><button class="tb"><svg><use href="#open"/></svg></button><button class="tb"><svg><use href="#save"/></svg></button><button class="tb"><svg><use href="#layout"/></svg></button><button class="tb"><svg><use href="#layoutm"/></svg></button><button class="tb"><svg><use href="#style"/></svg></button>
  </div>
  <div class="group"><i class="grip"></i>
    <button class="tb"><svg><use href="#hand"/></svg></button><button class="tb"><svg><use href="#pan"/></svg></button><button class="tb"><svg><use href="#zin"/></svg></button><button class="tb"><svg><use href="#zout"/></svg></button><button class="tb"><svg><use href="#zfull"/></svg></button><button class="tb"><svg><use href="#zsel"/></svg></button><button class="tb"><svg><use href="#zlay"/></svg></button><button class="tb" disabled><svg><use href="#znat"/></svg></button><button class="tb"><svg><use href="#zlast"/></svg></button><button class="tb" disabled><svg><use href="#znext"/></svg></button><button class="tb"><svg><use href="#mapn"/></svg></button><button class="tb"><svg><use href="#map3"/></svg></button><button class="tb"><svg><use href="#bmn"/></svg></button><button class="tb"><svg><use href="#bm"/></svg></button><button class="tb"><svg><use href="#clock"/></svg></button><button class="tb"><svg><use href="#refresh"/></svg></button>
  </div>
  <div class="group"><i class="grip"></i>
    <button class="tb"><svg><use href="#ident"/></svg></button><button class="tb"><svg><use href="#table"/></svg></button><button class="tb"><svg><use href="#abacus"/></svg></button><button class="tb on"><svg><use href="#gear"/></svg></button><button class="tb"><svg><use href="#sigma"/></svg></button><button class="tb"><svg><use href="#ruler"/></svg></button><button class="drop"><svg><use href="#dn"/></svg></button><button class="tb"><svg><use href="#tip"/></svg></button><button class="tb" disabled><svg><use href="#act"/></svg></button><button class="drop" disabled><svg><use href="#dn"/></svg></button><button class="tb"><svg><use href="#text"/></svg></button><button class="drop"><svg><use href="#dn"/></svg></button>
  </div>
  <div class="group"><i class="grip"></i>
    <button class="tb"><svg><use href="#gadd"/></svg></button><button class="tb"><svg><use href="#gsea"/></svg></button><button class="tb"><svg><use href="#gbin"/></svg></button>
  </div>
  <div class="group"><i class="grip"></i>
    <button class="tb"><svg><use href="#py"/></svg></button><button class="tb"><svg><use href="#pc"/></svg></button>
    <button class="tb"><svg class="lbl" viewBox="0 0 24 24"><use href="#pc"/><text x="2" y="9">Prev</text><text x="2" y="19">Inter</text></svg></button>
    <button class="tb"><svg class="lbl" viewBox="0 0 24 24"><use href="#pc"/><text x="2" y="9">Prev</text><text x="2" y="19">Clip</text></svg></button>
    <button class="tb"><svg class="lbl thin" viewBox="0 0 24 24"><use href="#pc"/><text x="4" y="9">Multi</text></svg></button>
    <button class="tb"><svg class="lbl thin" viewBox="0 0 24 24"><use href="#pc"/><text x="0" y="8">Paste</text><text x="0" y="16">interse</text></svg></button>
    <button class="tb"><svg class="lbl red" viewBox="0 0 24 24"><use href="#pc"/><text x="0" y="7">CLIP</text><text x="10" y="14">SEL</text></svg></button>
    <button class="tb" disabled><svg><use href="#curve"/></svg></button>
  </div>
  <div class="group labels"><i class="grip"></i>
    <button class="tb"><svg><use href="#abc"/></svg></button><button class="tb"><svg><use href="#pie"/></svg></button><i class="sep"></i><button class="tb"><svg><use href="#abct"/></svg></button><button class="tb"><svg><use href="#abcr"/></svg></button><i class="sep"></i><button class="tb" disabled><svg><use href="#abct"/></svg></button><button class="tb" disabled><svg><use href="#abce"/></svg></button><button class="tb" disabled><svg><use href="#abcg"/></svg></button><button class="tb" disabled><svg><use href="#abco"/></svg></button><button class="tb" disabled><svg><use href="#abcp"/></svg></button>
  </div>
</div>

<div class="toolbar row2">
  <div class="group"><i class="grip"></i>
    <button class="tb" disabled><svg><use href="#pencils"/></svg></button><button class="tb"><svg><use href="#pencil"/></svg></button><button class="tb" disabled><svg><use href="#savee"/></svg></button><button class="tb" disabled><svg><use href="#pts"/></svg></button><button class="tb" disabled><svg><use href="#vtx"/></svg></button><button class="drop"><svg><use href="#dn"/></svg></button><button class="tb" disabled><svg><use href="#attr"/></svg></button><button class="tb" disabled><svg><use href="#del"/></svg></button><button class="tb" disabled><svg><use href="#cut"/></svg></button><button class="tb" disabled><svg><use href="#copy"/></svg></button><button class="tb" disabled><svg><use href="#paste"/></svg></button><button class="tb" disabled><svg><use href="#undo"/></svg></button><button class="tb" disabled><svg><use href="#redo"/></svg></button>
  </div>
  <div class="group"><i class="grip"></i>
    <button class="tb"><svg><use href="#dsm"/></svg></button><button class="tb"><svg><use href="#gpkg"/></svg></button><button class="tb"><svg><use href="#vnew"/></svg></button><button class="tb"><svg><use href="#feather"/></svg></button><button class="tb"><svg><use href="#chip"/></svg></button><i class="sep"></i><button class="tb"><svg><use href="#virt"/></svg></button><i class="sep"></i>
  </div>
  <div class="group"><i class="grip"></i>
    <button class="tb on"><svg><use href="#sel"/></svg></button><button class="drop on"><svg><use href="#dn"/></svg></button><button class="tb"><svg><use href="#selv"/></svg></button><button class="drop"><svg><use href="#dn"/></svg></button><button class="tb"><svg><use href="#desel"/></svg></button><button class="drop"><svg><use href="#dn"/></svg></button><button class="tb"><svg><use href="#sloc"/></svg></button>
  </div>
  <div class="group"><i class="grip"></i>
    <button class="tb" disabled><svg><use href="#arc"/></svg></button><button class="tb" disabled><svg><use href="#tri"/></svg></button><button class="tb" disabled><svg><use href="#ptsg"/></svg></button><button class="drop" disabled><svg><use href="#dn"/></svg></button><button class="tb" disabled><svg><use href="#p1"/></svg></button><button class="tb" disabled><svg><use href="#p2"/></svg></button><button class="tb" disabled><svg><use href="#p3"/></svg></button><button class="tb" disabled><svg><use href="#p4"/></svg></button><button class="tb" disabled><svg><use href="#p3"/></svg></button><button class="tb" disabled><svg><use href="#p5"/></svg></button><button class="tb" disabled><svg><use href="#p6"/></svg></button><button class="tb" disabled><svg><use href="#p7"/></svg></button><button class="tb" disabled><svg><use href="#p8"/></svg></button><button class="tb" disabled><svg><use href="#p9"/></svg></button><button class="tb" disabled><svg><use href="#p10"/></svg></button><button class="tb" disabled><svg><use href="#p11"/></svg></button><button class="tb" disabled><svg><use href="#p11"/></svg></button><button class="tb" disabled><svg><use href="#p12"/></svg></button><button class="tb" disabled><svg><use href="#p13"/></svg></button><button class="tb" disabled><svg><use href="#p14"/></svg></button><button class="drop" disabled><svg><use href="#dn"/></svg></button>
  </div>
  <div class="group snap"><i class="grip"></i>
    <button class="tb on"><svg><use href="#magnet"/></svg></button><button class="tb"><svg><use href="#snapv"/></svg></button><button class="tb on"><svg><use href="#snapd"/></svg></button>
    <span class="field tol"><input type="text" value="12" aria-label="Snapping tolerance"><span class="steps"><svg><use href="#up"/></svg><svg><use href="#dn"/></svg></span></span>
    <span class="field unit"><select aria-label="Tolerance unit"><option>px</option></select><svg class="i8"><use href="#dn"/></svg></span>
    <button class="tb"><svg><use href="#topo"/></svg></button><button class="more">»</button>
  </div>
  <div class="group"><i class="grip"></i><button class="tb"><svg><use href="#book"/></svg></button></div>
  <div class="group"><i class="grip"></i></div>
</div>

<main class="work">
  <aside class="left">
    <section class="dock browser">
      <h2>Browser<button aria-label="Float"><svg class="i12"><use href="#float"/></svg></button><button aria-label="Close"><svg class="i12"><use href="#cls"/></svg></button></h2>
      <div class="tools"><button><svg><use href="#addl"/></svg></button><button><svg><use href="#refresh"/></svg></button><button><svg><use href="#funnel"/></svg></button><button><svg><use href="#coll"/></svg></button><button><svg><use href="#info"/></svg></button></div>
      <div class="frame">
        <ul class="tree">
          <li><svg class="tw"><use href="#rt"/></svg><svg class="ic"><use href="#earth"/></svg>WMS/WMTS</li>
          <li><i class="tw"></i><svg class="ic"><use href="#vtile"/></svg>Vector Tiles</li>
          <li><svg class="tw"><use href="#dn"/></svg><svg class="ic"><use href="#xyz"/></svg>XYZ Tiles</li>
          <li class="child"><i class="tw"></i><svg class="ic"><use href="#xyz"/></svg>Google Satellite</li>
          <li class="child hot"><i class="tw"></i><svg class="ic"><use href="#xyz"/></svg>OpenStreetMap</li>
          <li><i class="tw"></i><svg class="ic"><use href="#globe"/></svg>WCS</li>
          <li><svg class="tw"><use href="#rt"/></svg><svg class="ic"><use href="#wfs"/></svg>WFS / OGC API - Features</li>
          <li><svg class="tw"><use href="#rt"/></svg><svg class="ic"><use href="#globeo"/></svg>OWS</li>
          <li><svg class="tw"><use href="#rt"/></svg><svg class="ic"><use href="#arcm"/></svg>ArcGIS Map Service</li>
          <li><svg class="tw"><use href="#rt"/></svg><svg class="ic"><use href="#arcf"/></svg>ArcGIS Feature Service</li>
          <li><i class="tw"></i><svg class="ic"><use href="#geon"/></svg>GeoNode</li>
        </ul>
        <div class="scroll"><svg class="i8"><use href="#up"/></svg><i></i><svg class="i8"><use href="#dn"/></svg></div>
      </div>
    </section>
    <div class="split"><i></i></div>
    <section class="dock layers">
      <h2>Layers<button aria-label="Float"><svg class="i12"><use href="#float"/></svg></button><button aria-label="Close"><svg class="i12"><use href="#cls"/></svg></button></h2>
      <div class="tools"><button><svg><use href="#brush"/></svg></button><button><svg><use href="#grpa"/></svg></button><button><svg><use href="#eyed"/></svg></button><button><svg><use href="#funnel"/></svg></button><button class="expr"><svg><use href="#eps"/></svg><svg class="i8"><use href="#dn"/></svg></button><button><svg><use href="#expd"/></svg></button><button><svg><use href="#coll"/></svg></button><button><svg><use href="#reml"/></svg></button></div>
      <div class="frame">
        <ul class="layerlist">
          <li class="act"><i class="tw"></i><label><input type="checkbox" checked><i class="pt" style="background:#8b5a7c"></i><b><u>baseline_points</u></b></label><svg class="mem"><use href="#mem"/></svg></li>
          <li><i class="tw"></i><label><input type="checkbox" checked><i class="ln" style="background:#8d6f2c"></i><b>translated_baseline_lines</b></label></li>
          <li class="off"><i class="tw"></i><label><input type="checkbox"><i class="pt" style="background:#6f8a2a"></i>translated_sampled_points</label></li>
          <li class="off"><i class="tw"></i><label><input type="checkbox"><i class="pt" style="background:#8c74b8"></i>sampled_elevation_point_layer</label></li>
          <li class="off"><i class="tw"></i><label><input type="checkbox"><i class="pt" style="background:#e56b3c"></i>merged_points_along_line</label></li>
          <li class="off"><i class="tw"></i><label><input type="checkbox"><i class="pt" style="background:#f39a1e"></i>points_along_clipped_gridlines_300m</label></li>
          <li class="off"><i class="tw"></i><label><input type="checkbox"><i class="pt" style="background:#b8393b"></i>clipped_gridline_right_vertex</label></li>
          <li class="off"><i class="tw"></i><label><input type="checkbox"><i class="ln" style="background:#d9c3cc"></i>simplified_clipped_grid_island_boundary</label></li>
          <li class="off"><i class="tw"></i><label><input type="checkbox"><i class="ln" style="background:#a774b9"></i>clipped_grid_vertices_to_path</label></li>
          <li class="off"><i class="tw"></i><label><input type="checkbox"><i class="pt" style="background:#f29aa8"></i>clipped_grid_island_boundary_vertices</label></li>
          <li class="off"><i class="tw"></i><label><input type="checkbox"><i class="ln" style="background:#84ab88"></i>clipped_grid_island_boundary</label></li>
          <li class="off"><i class="tw"></i><label><input type="checkbox"><i class="ln" style="background:#e0c25c"></i>translated_extent_grid</label></li>
          <li class="off"><i class="tw"></i><label><input type="checkbox"><i class="ln" style="background:#bb8672"></i>initial_extent_grid</label></li>
          <li class="off"><i class="tw"></i><label><input type="checkbox"><i class="sq" style="background:#7eed94"></i>Vancouver Island</label></li>
          <li class="off"><i class="tw"></i><label><input type="checkbox"><i class="sq" style="background:#739d6f"></i>vancouver_island_extent</label></li>
          <li class="off"><svg class="tw"><use href="#rt"/></svg><label><input type="checkbox"><svg class="ras"><use href="#rast"/></svg>elevation_virtual_raster</label></li>
          <li><svg class="tw"><use href="#rt"/></svg><label><input type="checkbox"><svg class="ras"><use href="#grp"/></svg>NASADEM</label></li>
        </ul>
      </div>
    </section>
  </aside>
  <section class="map"><svg id="canvas"></svg></section>
  <aside class="right dock">
    <h2>Processing Toolbox<button aria-label="Float"><svg class="i12"><use href="#float"/></svg></button><button aria-label="Close"><svg class="i12"><use href="#cls"/></svg></button></h2>
    <div class="tools"><button><svg><use href="#gear"/></svg></button><button><svg><use href="#py"/></svg></button><button><svg><use href="#clock"/></svg></button><button><svg><use href="#log"/></svg></button><i class="sep"></i><button><svg><use href="#note"/></svg></button><i class="sep"></i><button><svg><use href="#wrench"/></svg></button></div>
    <div class="search"><input type="text" value="extract vertices" aria-label="Search algorithms"><svg viewBox="0 0 14 12"><path d="M4 1h9v10H4L0 6z" fill="#888"/><path d="M5 3.500l5 5M10 3.500l-5 5" stroke="#fff" stroke-width="1.500"/></svg></div>
    <div class="results">
      <ul class="algs">
        <li class="cat">Recently used</li>
        <li><svg><use href="#ext"/></svg>Extract vertices</li>
        <li><svg><use href="#gear"/></svg>Extract specific vertices</li>
        <li class="cat">Vector geometry</li>
        <li><svg><use href="#gear"/></svg>Extract specific vertices</li>
        <li class="hot"><svg><use href="#ext"/></svg>Extract vertices</li>
      </ul>
    </div>
  </aside>
</main>

<footer class="status">
  <span class="field locator"><svg viewBox="0 0 12 12"><circle cx="7" cy="5" r="3.500" fill="none" stroke="#777"/><path d="M4.500 7.500L1 11" stroke="#777" stroke-width="1.500"/></svg><input type="text" placeholder="Type to locate (Ctrl+K)" aria-label="Locator"></span>
  <label class="coord">Coordinate <span class="field"><input type="text" value="-14245584,6316601"></span></label>
  <svg class="mouse"><use href="#mouse"/></svg>
  <label class="scale">Scale <span class="field"><input type="text" value="1:2296673"><span class="pick"><svg class="i8"><use href="#dn"/></svg></span></span></label>
  <svg class="lock"><use href="#lock"/></svg>
  <label class="mag">Magnifier <span class="field"><input type="text" value="100%"><span class="steps"><svg><use href="#up"/></svg><svg><use href="#dn"/></svg></span></span></label>
  <label class="rot">Rotation <span class="field"><input type="text" value="0.0 °"><span class="steps"><svg><use href="#up"/></svg><svg><use href="#dn"/></svg></span></span></label>
  <label class="render"><input type="checkbox" checked>Render</label>
  <button class="crs"><svg><use href="#world"/></svg>EPSG:3857</button>
  <button class="log" aria-label="Messages"><svg><use href="#msg"/></svg></button>
</footer>

<section class="dialog" aria-label="Extract Vertices">
  <header><svg class="i16"><use href="#q"/></svg><span>Extract Vertices</span><button aria-label="Close dialog"><svg class="i12" viewBox="0 0 12 12"><path d="M1 1l10 10M11 1L1 11" stroke="#888"/></svg></button></header>
  <div class="panes">
    <div class="params">
      <div class="tabs"><button class="cur">Parameters</button><button>Log</button></div>
      <div class="sheet">
        <label for="inl">Input layer</label>
        <div class="line">
          <span class="field pickl"><svg class="ic"><use href="#vlin"/></svg><select id="inl"><option>translated_baseline_lines [EPSG:3857]</option></select><svg class="i8"><use href="#dn"/></svg></span>
          <button class="flat"><svg><use href="#loop"/></svg></button><button class="flat"><svg><use href="#wrench"/></svg></button><button class="dots">…<svg><use href="#dn"/></svg></button>
        </div>
        <label class="check dis"><input type="checkbox" disabled>Selected features only</label>
        <label for="out">Vertices</label>
        <div class="line out"><span class="field"><input id="out" type="text" placeholder="[Create temporary layer]"></span><button class="dots">…<svg><use href="#dn"/></svg></button></div>
        <label class="check"><input type="checkbox" checked>Open output file after running algorithm</label>
      </div>
    </div>
    <div class="mid"><svg class="i8"><use href="#rt"/></svg></div>
    <article class="help">
      <h1>Extract vertices</h1>
      <p>This algorithm takes a line or polygon layer<br>and generates a point layer with points<br>representing the vertices in the input lines or<br>polygons. The attributes associated to each<br>point are the same ones associated to the line<br>or polygon that the point belongs to.</p>
      <p>Additional fields are added to the point<br>indicating the vertex index (beginning at 0),<br>the vertex’s part and its index within the part<br>(as well as its ring for polygons), distance<br>along original geometry and bisector angle of<br>vertex for original geometry.</p>
    </article>
  </div>
  <div class="prog"><div class="bar" role="progressbar" aria-valuenow="0">0%</div><button class="btn" disabled>Cancel</button></div>
  <div class="acts"><button class="btn batch">Run as Batch Process…</button><button class="btn">Run</button><button class="btn">Close</button><button class="btn">Help</button></div>
</section>

<div class="note"><svg viewBox="0 0 56 76"><path d="M41 2l13 31-12-6-19 46-21-8L22 18l-12-4z" fill="#ff0" stroke="#000" stroke-width="2"/></svg><p>Field calculator</p></div>
<script src="map.js"></script>
</body>
</html>
```
FILE: styles.css
```css
* { box-sizing: border-box; }
html, body { margin: 0; height: 100%; }
body { display: flex; flex-direction: column; min-height: 100vh; background: #f0f0f0; color: #000; font: 12px/18px "Open Sans", "Noto Sans", sans-serif; position: relative; overflow: hidden; }
button, input, select { font: inherit; color: inherit; margin: 0; padding: 0; border: 0; background: none; outline: 0; }
select { appearance: none; }
button { display: flex; align-items: center; justify-content: center; }
ul, h1, h2, p { margin: 0; padding: 0; list-style: none; font-weight: normal; font-size: inherit; }
svg { flex: none; display: block; }
.defs { position: absolute; width: 0; height: 0; }
.i8 { width: 8px; height: 8px; }
.i12 { width: 12px; height: 12px; }
.i16 { width: 16px; height: 16px; }

.titlebar { display: flex; align-items: center; height: 24px; background: #fff; color: #8a8a8a; padding: 0 3px 0 2px; flex: none; }
.titlebar .title { margin-left: 6px; flex: 1; }
.win { width: 47px; height: 22px; }
.menubar { display: flex; gap: 14px; height: 20px; padding: 1px 9px 0; flex: none; }
.menubar a { color: #8f8f8f; text-decoration: none; }

.toolbar { display: grid; height: 41px; flex: none; background: linear-gradient(#fafafa, #ededed); border-top: 1px solid #d8d8d8; border-bottom: 1px solid #b8b8b8; padding-bottom: 2px; }
.row1 { grid-template-columns: 223px 567px 363px 120px 291px 1fr; }
.row2 { grid-template-columns: 441px 238px 192px 695px 366px 51px 1fr; height: 42px; border-bottom: 2px solid #b4b4b4; }
.group { display: flex; align-items: center; min-width: 0; padding: 0 3px 0 6px; }
.group > .grip { margin-right: 2px; }
.labels { width: 341px; }
.grip { flex: none; width: 5px; height: 18px; background: radial-gradient(circle, #aaa 30%, transparent 45%) 0 0 / 3px 3px; }
.tb { flex: 1 1 0; min-width: 0; height: 32px; border-radius: 3px; }
.tb svg { width: 24px; height: 24px; }
.tb.on, .drop.on { background: #dcdcdc; border: 1px solid #a5a5a5; }
.tb:disabled svg { opacity: .35; filter: grayscale(.8); }
.drop { flex: none; width: 12px; height: 32px; border-radius: 3px; }
.drop svg { width: 8px; height: 8px; }
.drop:disabled { opacity: .5; }
.sep { flex: none; width: 1px; height: 20px; margin: 0 4px; background: #c8c8c8; }
.lbl { overflow: visible; }
.lbl text { font-size: 8px; font-weight: bold; }
.lbl.thin text { font-size: 7px; font-weight: normal; }
.lbl.red text { font-size: 7px; fill: #f22; }
.field { display: flex; align-items: center; border: 1px solid #b0b0b0; border-radius: 3px; background: #fff; height: 22px; padding-left: 5px; font-size: 11px; }
.field input { flex: 1; min-width: 0; width: 0; }
.field select { flex: 1; min-width: 0; }
.steps { display: flex; flex-direction: column; align-items: center; justify-content: center; gap: 2px; width: 14px; height: 100%; border-left: 1px solid #b8b8b8; background: #f4f4f4; }
.steps svg { width: 7px; height: 7px; }
.snap .tb { flex: 0 0 34px; }
.tol { width: 84px; margin: 0 2px; }
.unit { width: 92px; padding-right: 7px; background: linear-gradient(#fff, #f0f0f0); }
.more { flex: 1; padding-left: 20px; font-size: 16px; font-weight: bold; }

.work { flex: 1; display: flex; min-height: 0; }
.left { width: 400px; flex: none; display: flex; flex-direction: column; padding-right: 7px; border-right: 1px solid #b4b4b4; }
.dock { display: flex; flex-direction: column; }
.dock h2 { display: flex; align-items: center; gap: 3px; height: 20px; padding: 0 2px 0 4px; flex: none; }
.dock h2 button:first-of-type { margin-left: auto; }
.tools { display: flex; align-items: center; gap: 10px; height: 32px; padding: 0 0 3px 8px; flex: none; }
.tools svg { width: 16px; height: 16px; }
.tools svg.i8 { width: 8px; height: 8px; }
.tools .expr { gap: 6px; }
.browser { flex: 0 0 276px; }
.frame { flex: 1; display: flex; min-height: 0; border: 1px solid #b4b4b4; background: #fff; align-items: flex-start; }
.tree { flex: 1; display: grid; grid-auto-rows: 1fr; height: 207px; }
.tree li { display: flex; align-items: center; justify-self: start; padding-left: 6px; white-space: nowrap; }
.tree .child { padding-left: 27px; }
.tree .hot { width: 190px; }
.hot { background: #efefef; }
.tw { flex: none; width: 8px; height: 8px; margin-right: 10px; }
.ic { width: 16px; height: 16px; margin-right: 7px; }
.scroll { align-self: stretch; width: 15px; display: flex; flex-direction: column; align-items: center; padding: 3px 0; border-left: 1px solid #b4b4b4; background: #f7f7f7; }
.scroll i { align-self: stretch; height: 103px; margin: 3px 0 auto; background: #e4e4e4; border: solid #b4b4b4; border-width: 1px 0; }
.split { height: 7px; flex: none; display: flex; justify-content: center; }
.split i { width: 18px; border-top: 1px dotted #999; margin-top: 3px; }
.layers { flex: 1; min-height: 0; }
.layerlist { flex: 1; display: grid; grid-auto-rows: 1fr; height: 319px; }
.layerlist li { display: flex; align-items: center; padding-left: 6px; }
.layerlist label { display: flex; align-items: center; }
.layerlist b { font-size: 11px; }
.layerlist .act { background: #efefef; }
.layerlist .off { color: #777; font-weight: bold; font-style: italic; }
.mem { width: 16px; height: 16px; margin: 0 5px 0 auto; background: #fff; }
input[type=checkbox] { appearance: none; flex: none; width: 14px; height: 14px; border: 1px solid #b4b4b4; border-radius: 1px; background: #fff; display: flex; align-items: center; justify-content: center; }
input[type=checkbox]:checked::before { content: ""; width: 4px; height: 8px; border: solid #000; border-width: 0 2px 2px 0; transform: rotate(40deg); margin-bottom: 2px; }
.pt { width: 8px; height: 8px; border: 1px solid #555; border-radius: 50%; margin: 0 11px; }
.ln { width: 15px; height: 2px; margin: 0 7px; }
.sq { width: 17px; height: 17px; border: 1px solid #555; margin: 0 6px; }
.ras { width: 15px; height: 15px; margin: 0 7px 0 8px; }

.map { flex: 1; min-width: 0; background: #fff; border-right: 1px solid #b4b4b4; border-bottom: 1px solid #b4b4b4; }
#canvas { width: 100%; height: 100%; }
.right { width: 396px; flex: none; padding-left: 6px; }
.right .tools { padding-left: 9px; }
.right .sep { margin: 0 -1px; }
.search { display: flex; align-items: center; height: 22px; border: 1px solid #b4b4b4; border-radius: 2px; background: #fff; padding: 0 8px 0 30px; flex: none; }
.search input { flex: 1; }
.search svg { width: 14px; height: 12px; }
.results { flex: 1; border: 1px solid #b4b4b4; background: #fff; }
.algs { display: grid; grid-auto-rows: 1fr; height: 113px; }
.algs li { display: flex; align-items: center; padding-left: 45px; }
.algs .cat { padding-left: 47px; }
.algs svg { width: 16px; height: 16px; margin-right: 7px; }

.status { flex: none; display: flex; align-items: center; height: 29px; padding: 0 7px 0 4px; font-size: 11px; }
.status label { display: flex; align-items: center; gap: 4px; }
.locator { width: 208px; margin-right: auto; color: #777; gap: 8px; padding-left: 8px; }
.locator svg { width: 12px; height: 12px; }
.coord .field { width: 117px; }
.mouse { width: 16px; height: 16px; margin: 0 12px 0 6px; }
.scale .field { width: 84px; }
.pick { display: flex; align-items: center; justify-content: center; width: 20px; height: 100%; border-left: 1px solid #b8b8b8; }
.lock { width: 14px; height: 16px; margin: 0 7px 0 13px; }
.mag .field { width: 90px; }
.status .rot { margin-left: 10px; gap: 8px; }
.rot .field { width: 87px; }
.render { margin: 0 18px 0 8px; }
.crs { gap: 4px; }
.crs svg { width: 16px; height: 16px; }
.log { margin-left: 20px; }
.log svg { width: 17px; height: 16px; }

.dialog { position: absolute; left: 1004px; top: 147px; width: 649px; height: 577px; display: flex; flex-direction: column; background: #f0f0f0; border: 1px solid #a0a0a0; box-shadow: 0 4px 14px rgba(0,0,0,.35); font-size: 11px; padding-bottom: 11px; }
.dialog header { display: flex; align-items: center; gap: 5px; height: 31px; background: #fff; color: #8f8f8f; padding: 0 9px 0 8px; font-size: 12px; }
.dialog header button { margin-left: auto; }
.panes { flex: 1; display: flex; padding: 11px 11px 26px 12px; min-height: 0; }
.params { width: 363px; display: flex; flex-direction: column; }
.tabs { display: flex; align-items: flex-end; height: 25px; }
.tabs button { height: 22px; padding: 0 10px; border: 1px solid #b8b8b8; border-bottom: 0; background: #e9e9e9; }
.tabs .cur { height: 25px; padding: 0 10px; background: #fafafa; border-radius: 2px 2px 0 0; }
.sheet { flex: 1; border: 1px solid #b0b0b0; padding: 3px 5px; display: flex; flex-direction: column; }
.line { display: flex; height: 26px; margin: 3px 0 10px; align-items: flex-start; }
.pickl { width: 246px; height: 26px; padding: 0 8px 0 4px; margin-right: 9px; background: linear-gradient(#fff, #f0f0f0); }
.pickl .ic { margin-right: 4px; }
.flat { width: 26px; height: 26px; margin-right: 10px; }
.flat svg { width: 24px; height: 24px; }
.dots { margin-left: auto; width: 24px; height: 22px; border: 1px solid #b0b0b0; border-radius: 2px; background: linear-gradient(#fff, #f0f0f0); }
.dots svg { width: 5px; height: 5px; align-self: flex-end; }
.check { display: flex; align-items: center; gap: 5px; height: 14px; }
.dis { color: #808080; }
.dis input { background: #f0f0f0 !important; }
.sheet .check { margin-bottom: 7px; }
.sheet .out { height: 22px; margin-top: 5px; }
.out .field { width: 321px; padding-left: 3px; }
::placeholder { color: #777; opacity: 1; }
.mid { width: 16px; padding: 2px 0 0 2px; }
.help { flex: 1; min-width: 0; border: 1px solid #b0b0b0; background: #fff; color: #555; padding: 4px; line-height: 14px; font-size: 11px; font-family: "DejaVu Sans Condensed", "Open Sans", sans-serif; }
.help h1 { font-size: 17px; line-height: 24px; font-weight: bold; margin-bottom: 11px; color: #444; }
.help p { margin-bottom: 9px; white-space: nowrap; }
.prog, .acts { display: flex; gap: 6px; padding: 0 11px 0 12px; }
.prog { margin-bottom: 6px; }
.bar { flex: 1; height: 22px; border: 1px solid #a8a8a8; border-radius: 2px; background: #fff; text-align: center; line-height: 20px; }
.btn { width: 84px; height: 22px; border: 1px solid #a8a8a8; border-radius: 2px; background: linear-gradient(#fff, #f0f0f0); }
.btn:disabled { color: #888; border-color: #c4c4c4; }
.batch { width: 125px; margin-right: auto; }

.note { position: absolute; left: 711px; top: 73px; pointer-events: none; }
.note svg { width: 56px; height: 76px; margin-left: 99px; }
.note p { font: 34px/44px Lato, sans-serif; margin-top: 6px; white-space: nowrap; }
```
FILE: map.js
```js
// West and east ends of each grid line, listed from north to south.
const west = [472,457,447,424,413,415,420,420,437,428,432,447,447,450,459,468,479,503,502,496,498,496,521,519,525,536,530,524,519,509,511,526,598,606,621,626,637,640,645,649,674,686,687,709,687,691,697,702,713,714,738,764,765,768,767,764,767,762,770,816,828,828,829,848,875,868,872,873,884,897,899,926,933,935,946,951,960,999,994,1024,1021,1023,1038,1040,1057,1078,1095,1105,1111,1125,1146,1167,1189,1202,1220,1239,1257,1282,1308,1318];
const east = [515,533,555,572,589,604,601,610,622,635,649,673,687,725,744,772,839,862,876,892,955,971,980,980,986,988,990,991,993,995,1001,1004,1010,1015,1020,1025,1030,1036,1042,1048,1054,1060,1066,1072,1078,1084,1090,1096,1102,1108,1114,1119,1124,1130,1135,1140,1145,1150,1156,1162,1189,1214,1228,1219,1261,1263,1292,1311,1312,1303,1295,1300,1299,1320,1324,1325,1340,1348,1356,1364,1360,1371,1375,1362,1355,1367,1369,1369,1370,1375,1376,1375,1378,1387,1395,1386,1353,1346,1342,1342];
const originX = 399.5, top0 = 152, step = 7.552;
const lines = [], dots = [];
west.forEach((w, i) => {
  const y = (top0 + i * step).toFixed(1), a = w - originX, b = east[i] - originX;
  lines.push(`<path d="M${a} ${y}H${b}"/>`);
  dots.push(`<circle cx="${a}" cy="${y}" r="3.600"/><circle cx="${b}" cy="${y}" r="3.600"/>`);
});
document.getElementById('canvas').innerHTML =
  `<g stroke="#7d621c" stroke-width="1.200">${lines.join('')}</g><g fill="#c43a3a" stroke="#3c2323" stroke-width="1.100">${dots.join('')}</g>`;
```
